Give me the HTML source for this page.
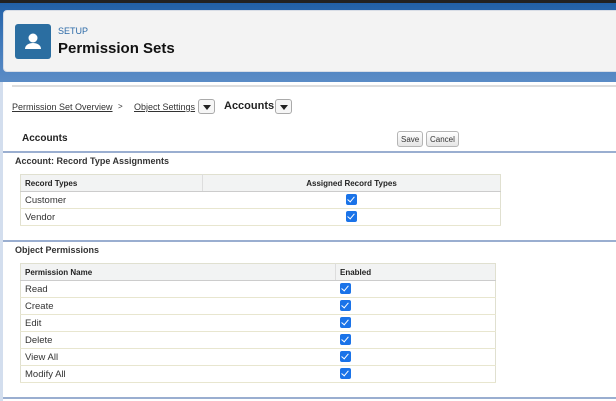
<!DOCTYPE html>
<html><head><style>
*{margin:0;padding:0;box-sizing:border-box}
body{width:616px;height:401px;overflow:hidden;background:#fff;font-family:"Liberation Sans",Arial,sans-serif;position:relative;color:#222}
.bg{position:absolute;left:0;top:0;width:616px;height:82px;background:linear-gradient(#1f5ea5,#3f78b9 50%,#5b8cc6)}
.dark{position:absolute;left:0;top:0;width:616px;height:3px;background:#222}
.card{position:absolute;left:3px;top:10px;width:620px;height:62px;background:#f3f3f3;border-radius:4px;border:1px solid #d8dde6}
.icon{position:absolute;left:15px;top:24px;width:36px;height:35px;background:#2b6ea1;border-radius:3px}
.a{position:absolute;white-space:nowrap}
.main{position:absolute;left:3px;top:82px;width:613px;height:319px;background:#fff}
.lb{position:absolute;left:0;top:82px;width:3px;height:319px;background:#d3deee}
table{position:absolute;border-collapse:collapse;font-size:9.5px;color:#333}
td,th{height:17px;padding:0 4px;border-bottom:1px solid #e8e6cf;text-align:left}
th{background:#f2f3f3;font-weight:bold;font-size:8px;color:#222;border-bottom:1px solid #ccc}
table{border:1px solid #e0e0d0}
.cb{display:inline-block;width:11px;height:11px;background:#1a73e8;border-radius:2px;position:relative;vertical-align:middle}
.cb:after{content:"";position:absolute;left:3.5px;top:1px;width:3px;height:6px;border:solid #fff;border-width:0 1.7px 1.7px 0;transform:rotate(40deg)}
.hl{position:absolute;left:3px;width:613px;height:2px;background:#9aaed0}
.btn{position:absolute;top:131px;height:16px;border:1px solid #b5b5b5;border-radius:3px;background:linear-gradient(#fff,#e6e6e6);font-size:8px;padding:3px 3px;color:#333}
.dd{position:absolute;top:99px;width:17px;height:15px;border:1px solid #aaa;border-radius:3px;background:#f6f6f6}
.dd:after{content:"";position:absolute;left:4px;top:5px;border-left:4px solid transparent;border-right:4px solid transparent;border-top:5px solid #222}
</style></head><body>
<div class="bg"></div><div class="dark"></div>
<div class="card"></div>
<div class="icon"><svg width="36" height="35" viewBox="0 0 36 35"><circle cx="18" cy="14" r="4.5" fill="#fff"/><path d="M10 25c0-4 4-6 8-6s8 2 8 6z" fill="#fff"/></svg></div>
<div class="a" style="left:58px;top:26px;font-size:9px;color:#2d6ba8">SETUP</div>
<div class="a" style="left:58px;top:40px;font-size:15px;font-weight:bold;color:#111">Permission Sets</div>
<div class="lb"></div>
<div class="main"></div>
<div style="position:absolute;left:12px;top:85px;width:604px;height:2px;background:#ddd"></div>
<div class="a" style="left:12px;top:102px;font-size:9px;color:#333;text-decoration:underline">Permission Set Overview</div>
<div class="a" style="left:118px;top:102px;font-size:8px;color:#333">&gt;</div>
<div class="a" style="left:134px;top:102px;font-size:9px;color:#333;text-decoration:underline">Object Settings</div>
<div class="dd" style="left:198px"></div>
<div class="a" style="left:224px;top:100px;font-size:11px;font-weight:bold;color:#222">Accounts</div>
<div class="dd" style="left:275px"></div>
<div class="a" style="left:22px;top:133px;font-size:10px;font-weight:bold">Accounts</div>
<div class="btn" style="left:397px">Save</div>
<div class="btn" style="left:426px">Cancel</div>
<div class="hl" style="top:151px"></div>
<div class="a" style="left:15px;top:156px;font-size:9px;font-weight:bold;color:#333">Account: Record Type Assignments</div>
<table style="left:20px;top:174px;width:481px">
<tr><th style="width:182px;border-right:1px solid #ddd">Record Types</th><th style="text-align:center">Assigned Record Types</th></tr>
<tr><td>Customer</td><td style="text-align:center"><span class="cb"></span></td></tr>
<tr><td>Vendor</td><td style="text-align:center"><span class="cb"></span></td></tr>
</table>
<div class="hl" style="top:240px"></div>
<div class="a" style="left:15px;top:245px;font-size:9px;font-weight:bold;color:#333">Object Permissions</div>
<table style="left:20px;top:263px;width:476px">
<tr><th style="width:315px;border-right:1px solid #ddd">Permission Name</th><th>Enabled</th></tr>
<tr><td>Read</td><td><span class="cb"></span></td></tr>
<tr><td>Create</td><td><span class="cb"></span></td></tr>
<tr><td>Edit</td><td><span class="cb"></span></td></tr>
<tr><td>Delete</td><td><span class="cb"></span></td></tr>
<tr><td>View All</td><td><span class="cb"></span></td></tr>
<tr><td>Modify All</td><td><span class="cb"></span></td></tr>
</table>
<div class="hl" style="top:397px"></div>
</body></html>
